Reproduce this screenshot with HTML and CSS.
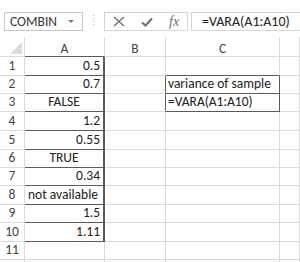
FILE: index.html
```html
<!DOCTYPE html>
<html lang="en">
<head>
    <meta charset="UTF-8">
    <meta name="viewport" content="width=device-width, initial-scale=1.0">
    <title>VARA - Spreadsheet</title>
    <link rel="stylesheet" href="styles.css">
</head>
<body>
    <div class="toolbar">
        <div class="namebox">
            <span>COMBIN</span>
            <span class="caret"></span>
        </div>
        <div class="grip"><i></i><i></i><i></i><i></i></div>
        <div class="fxbox">
            <svg class="icon-x" width="12" height="11" viewBox="0 0 12 11">
                <path d="M1 1 L11 10 M11 1 L1 10" stroke="#6f6f6f" stroke-width="1.4" fill="none"/>
            </svg>
            <svg class="icon-ok" width="12" height="10" viewBox="0 0 12 10">
                <path d="M1 5.5 L4.5 8.5 L11 1.5" stroke="#6f6f6f" stroke-width="2" fill="none"/>
            </svg>
            <span class="fx">fx</span>
        </div>
        <div class="formula">=VARA(A1:A10)</div>
    </div>

    <div class="sheet">
        <!-- header row -->
        <div class="corner"><span class="tri"></span></div>
        <div class="colhead dark-b">A</div>
        <div class="colhead">B</div>
        <div class="colhead">C</div>
        <div class="colhead"></div>

        <div class="rowhead">1</div>
        <div class="cell a num">0.5</div>
        <div class="cell"></div>
        <div class="cell dark-b"></div>
        <div class="cell"></div>

        <div class="rowhead">2</div>
        <div class="cell a num">0.7</div>
        <div class="cell dark-r"></div>
        <div class="cell box">variance of sample</div>
        <div class="cell"></div>

        <div class="rowhead">3</div>
        <div class="cell a mid">FALSE</div>
        <div class="cell dark-r"></div>
        <div class="cell box">=VARA(A1:A10)</div>
        <div class="cell"></div>

        <div class="rowhead">4</div>
        <div class="cell a num">1.2</div>
        <div class="cell"></div>
        <div class="cell"></div>
        <div class="cell"></div>

        <div class="rowhead">5</div>
        <div class="cell a num">0.55</div>
        <div class="cell"></div>
        <div class="cell"></div>
        <div class="cell"></div>

        <div class="rowhead">6</div>
        <div class="cell a mid">TRUE</div>
        <div class="cell"></div>
        <div class="cell"></div>
        <div class="cell"></div>

        <div class="rowhead">7</div>
        <div class="cell a num">0.34</div>
        <div class="cell"></div>
        <div class="cell"></div>
        <div class="cell"></div>

        <div class="rowhead">8</div>
        <div class="cell a">not available</div>
        <div class="cell"></div>
        <div class="cell"></div>
        <div class="cell"></div>

        <div class="rowhead">9</div>
        <div class="cell a num">1.5</div>
        <div class="cell"></div>
        <div class="cell"></div>
        <div class="cell"></div>

        <div class="rowhead">10</div>
        <div class="cell a num">1.11</div>
        <div class="cell"></div>
        <div class="cell"></div>
        <div class="cell"></div>

        <div class="rowhead">11</div>
        <div class="cell"></div>
        <div class="cell"></div>
        <div class="cell"></div>
        <div class="cell"></div>

        <!-- row 12 only peeks in at the bottom edge -->
        <div class="rowhead"></div>
        <div class="cell"></div>
        <div class="cell"></div>
        <div class="cell"></div>
        <div class="cell"></div>
    </div>
</body>
</html>
```

FILE: styles.css
```css
body {
    margin: 0;
    padding: 0;
    background-color: #fff;
    font-family: Carlito, Calibri, Lato, "Liberation Sans", sans-serif;
    font-size: 13.5px;
    color: #222;
    overflow: hidden;
}
.toolbar {
    display: flex;
    align-items: flex-start;
    height: 37px;
    padding-top: 12px;
    box-sizing: border-box;
}
.namebox {
    display: flex;
    align-items: center;
    justify-content: space-between;
    box-sizing: border-box;
    width: 79px;
    height: 19px;
    margin-left: 4px;
    padding: 0 8px 0 5px;
    border: 1px solid #c6c6c6;
    color: #333;
}
.caret {
    width: 0;
    height: 0;
    border-left: 3px solid transparent;
    border-right: 3px solid transparent;
    border-top: 3px solid #7a7a7a;
}
.grip {
    display: flex;
    flex-direction: column;
    gap: 2px;
    margin: 3px 0 0 10px;
}
.grip i {
    display: block;
    width: 1px;
    height: 1px;
    background-color: #b0b0b0;
}
.fxbox {
    display: flex;
    align-items: center;
    box-sizing: border-box;
    width: 84px;
    height: 19px;
    margin-left: 10px;
    padding-left: 8px;
    border: 1px solid #d4d4d4;
}
.icon-ok {
    margin-left: 16px;
}
.fx {
    margin-left: 16px;
    font-family: "Liberation Serif", serif;
    font-style: italic;
    font-size: 14px;
    color: #6f6f6f;
}
.formula {
    flex: 1;
    box-sizing: border-box;
    height: 19px;
    margin-left: 3px;
    padding-left: 10px;
    line-height: 17px;
    border: 1px solid #d4d4d4;
    border-right: none;
    font-size: 14px;
    color: #222;
}
.sheet {
    display: grid;
    grid-template-columns: 25px 80px 61px 114px 1fr;
    grid-template-rows: 20px 19px 18px 18px 19px 19px 18px 18px 19px 18px 19px 18px 3px;
}
.sheet > div {
    box-sizing: border-box;
    border-right: 1px solid #dadada;
    border-bottom: 1px solid #dadada;
}
.corner {
    position: relative;
}
.tri {
    position: absolute;
    right: 2px;
    bottom: 2px;
    width: 0;
    height: 0;
    border-left: 12px solid transparent;
    border-bottom: 12px solid #dcdcdc;
}
.colhead {
    display: flex;
    align-items: center;
    justify-content: center;
    padding-top: 3px;
    color: #444;
}
.rowhead {
    display: flex;
    align-items: flex-end;
    justify-content: center;
    padding-bottom: 1px;
    color: #444;
}
.cell {
    display: flex;
    align-items: flex-end;
    padding: 0 3px 1px 3px;
    white-space: nowrap;
}
.sheet > .a {
    border-right: 2px solid #5a5a5a;
    border-bottom: 1px solid #5a5a5a;
}
.num {
    justify-content: flex-end;
}
.mid {
    justify-content: center;
}
.sheet > .dark-b {
    border-bottom: 1px solid #5a5a5a;
}
.sheet > .dark-r {
    border-right: 1px solid #5a5a5a;
}
.sheet > .box {
    padding-left: 2px;
    border-right: 1px solid #5a5a5a;
    border-bottom: 1px solid #5a5a5a;
}
```
